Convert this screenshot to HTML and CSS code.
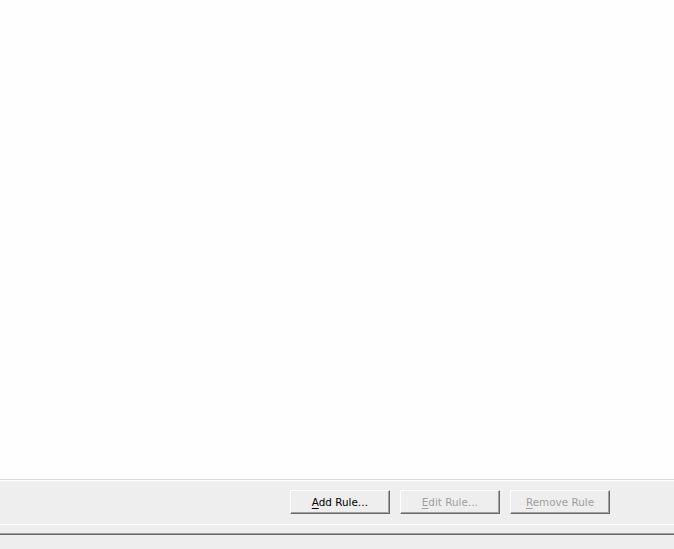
FILE: index.html
```html
<!DOCTYPE html>
<html>
<head>
<meta charset="utf-8">
<link rel="stylesheet" href="styles.css">
</head>
<body>
<div class="app">
  <div class="content"></div>
  <div class="buttonbar">
    <button class="btn"><u>A</u>dd Rule…</button>
    <button class="btn" disabled><u>E</u>dit Rule…</button>
    <button class="btn" disabled><u>R</u>emove Rule</button>
  </div>
  <div class="gap"></div>
  <div class="status"></div>
</div>
</body>
</html>
```
FILE: styles.css
```css
html, body {
  margin: 0;
  padding: 0;
}
body {
  background: #f0f0f0;
  font-family: "DejaVu Sans", sans-serif;
  font-size: 11px;
}
.app {
  width: 674px;
  height: 549px;
  display: flex;
  flex-direction: column;
  overflow: hidden;
}
.content {
  height: 479px;
  flex: 0 0 479px;
  background: #fefefe;
}
.buttonbar {
  flex: 0 0 auto;
  box-sizing: border-box;
  height: 45px;
  border-top: 1px solid #dcdcdc;
  box-shadow: inset 0 1px 0 #ffffff;
  background: #eeeeee;
  display: flex;
  justify-content: flex-end;
  align-items: flex-start;
  gap: 10px;
  padding: 10px 64px 0 0;
}
.btn {
  box-sizing: border-box;
  width: 100px;
  height: 24px;
  margin: 0;
  padding: 1px 0 0 0;
  background: #eeeeee;
  border: 1px solid;
  border-color: #ffffff #696969 #696969 #ffffff;
  box-shadow: inset -1px -1px 0 #a0a0a0;
  border-radius: 0;
  font-family: "DejaVu Sans", sans-serif;
  font-size: 10.4px;
  color: #000000;
  line-height: 19px;
}
.btn u {
  text-decoration-thickness: 1px;
  text-underline-offset: 2px;
}
.btn:disabled {
  color: #a0a0a0;
}
.gap {
  flex: 0 0 auto;
  box-sizing: border-box;
  height: 9px;
  border-top: 1px solid #ffffff;
  background: #eeeeee;
}
.status {
  flex: 1 1 auto;
  border-top: 1px solid #a0a0a0;
  box-shadow: inset 0 1px 0 #696969;
  background: #eeeeee;
}
```
